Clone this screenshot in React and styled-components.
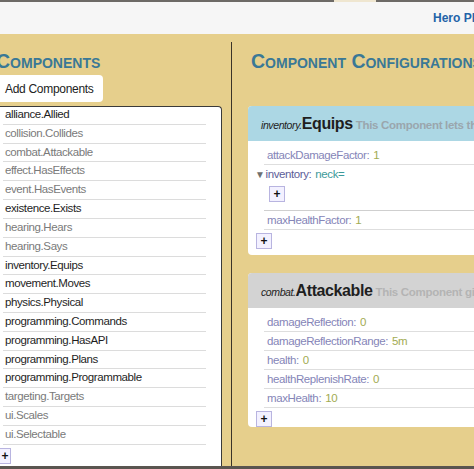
import React from "react";
import styled, { createGlobalStyle } from "styled-components";

const GlobalStyle = createGlobalStyle`
  html, body {
    margin: 0;
    padding: 0;
    overflow: hidden;
    background: #e6cf8c;
  }
  body {
    font-family: "Liberation Sans", Arial, sans-serif;
  }
`;

const components = [
  { name: "alliance.Allied", active: true },
  { name: "collision.Collides" },
  { name: "combat.Attackable" },
  { name: "effect.HasEffects" },
  { name: "event.HasEvents" },
  { name: "existence.Exists", active: true },
  { name: "hearing.Hears" },
  { name: "hearing.Says" },
  { name: "inventory.Equips", active: true },
  { name: "movement.Moves", active: true },
  { name: "physics.Physical", active: true },
  { name: "programming.Commands", active: true },
  { name: "programming.HasAPI", active: true },
  { name: "programming.Plans", active: true },
  { name: "programming.Programmable", active: true },
  { name: "targeting.Targets" },
  { name: "ui.Scales" },
  { name: "ui.Selectable" },
];

const attackable = [
  ["damageReflection", "0"],
  ["damageReflectionRange", "5m"],
  ["health", "0"],
  ["healthReplenishRate", "0"],
  ["maxHealth", "10"],
];

function App() {
  return (
    <Page>
      <GlobalStyle />
      <TopStrip>
        <Tab />
      </TopStrip>
      <Header>
        <HeaderLink>Hero Placeholder</HeaderLink>
      </Header>
      <Main>
        <LeftPanel>
          <Heading>Components</Heading>
          <AddButton>Add Components</AddButton>
          <ListBox>
            {components.map(({ name, active }) => (
              <ListRow key={name} active={active}>
                {name}
              </ListRow>
            ))}
            <PlusButton>+</PlusButton>
          </ListBox>
        </LeftPanel>
        <RightPanel>
          <Heading indent>Component Configurations</Heading>
          <Cards>
            <Card>
              <CardHeader tone="blue">
                <Namespace>inventory.</Namespace>
                <ComponentName>Equips</ComponentName>
                <Description>This Component lets the unit equip items</Description>
              </CardHeader>
              <CardBody>
                <PropRow>
                  <Key>attackDamageFactor:</Key>
                  <Value>1</Value>
                </PropRow>
                <NestedRow>
                  <NestedLine>
                    <Arrow>▼</Arrow>
                    <Key dark>inventory:</Key>
                    <Value teal>neck=</Value>
                  </NestedLine>
                  <NestedAdd>
                    <PlusButton small>+</PlusButton>
                  </NestedAdd>
                </NestedRow>
                <PropRow>
                  <Key>maxHealthFactor:</Key>
                  <Value>1</Value>
                </PropRow>
                <PlusButton small>+</PlusButton>
              </CardBody>
            </Card>
            <Card>
              <CardHeader tone="gray">
                <Namespace>combat.</Namespace>
                <ComponentName>Attackable</ComponentName>
                <Description light>This Component gives the unit health</Description>
              </CardHeader>
              <CardBody flush>
                {attackable.map(([k, v]) => (
                  <PropRow key={k}>
                    <Key>{k}:</Key>
                    <Value>{v}</Value>
                  </PropRow>
                ))}
                <PlusButton small>+</PlusButton>
              </CardBody>
            </Card>
          </Cards>
        </RightPanel>
      </Main>
      <BottomBar />
    </Page>
  );
}

const Page = styled.div`
  width: 640px;
  height: 469px;
  display: flex;
  flex-direction: column;
  background: #e6cf8c;
`;

const TopStrip = styled.div`
  height: 2px;
  background: #6d6a66;
  display: flex;
`;

const Tab = styled.div`
  width: 42px;
  margin-left: 334px;
  background: #efe6d0;
`;

const Header = styled.div`
  height: 32px;
  background: #f6f6f6;
  display: flex;
  align-items: center;
  padding-left: 433px;
  overflow: hidden;
`;

const HeaderLink = styled.span`
  color: #2363a8;
  font-weight: bold;
  font-size: 12px;
  white-space: nowrap;
`;

const Main = styled.div`
  flex: 1;
  display: grid;
  grid-template-columns: 232px 1fr;
  min-height: 0;
`;

const LeftPanel = styled.div`
  margin-top: 8px;
  border-right: 1px solid #3a3328;
  display: flex;
  flex-direction: column;
  align-items: flex-start;
  min-height: 0;
`;

const Heading = styled.h2`
  margin: 7px 0 2px ${(p) => (p.indent ? "19px" : "-4px")};
  font-size: 19.5px;
  line-height: 24px;
  font-weight: bold;
  font-variant: small-caps;
  color: #3a7896;
  white-space: nowrap;
`;

const AddButton = styled.div`
  width: 98px;
  height: 27px;
  padding-left: 5px;
  display: flex;
  align-items: center;
  background: #ffffff;
  border-radius: 0 4px 4px 0;
  font-size: 12px;
  letter-spacing: -0.3px;
  color: #222;
`;

const ListBox = styled.div`
  margin-top: 4px;
  width: 221px;
  flex: 1;
  background: #ffffff;
  border: 1px solid #3a3a3a;
  border-left: none;
  border-bottom: none;
  border-radius: 0 4px 0 0;
  overflow: hidden;
`;

const ListRow = styled.div`
  margin: 0 15px 0 3px;
  height: 17.82px;
  line-height: 17.82px;
  padding-left: 2px;
  border-bottom: 1px solid #dcdcdc;
  font-size: 11.5px;
  letter-spacing: -0.4px;
  color: ${(p) => (p.active ? "#1e1e1e" : "#7a7a7a")};
  white-space: nowrap;

  &:first-child {
    margin-top: -1px;
  }
`;

const PlusButton = styled.div`
  width: ${(p) => (p.small ? "14px" : "10px")};
  height: 14px;
  margin-top: 3px;
  display: flex;
  align-items: center;
  justify-content: center;
  background: #f3f1ff;
  border: 1px solid #b8b4e0;
  ${(p) => (p.small ? "" : "border-left: none;")}
  font-size: 12px;
  font-weight: bold;
  color: #111;
  line-height: 1;
`;

const RightPanel = styled.div`
  margin-top: 8px;
  display: flex;
  flex-direction: column;
  min-height: 0;
`;

const Cards = styled.div`
  margin: 31px 0 0 16px;
  display: flex;
  flex-direction: column;
  gap: 18px;
`;

const Card = styled.div`
  background: #ffffff;
  border-radius: 4px 0 0 4px;
  overflow: hidden;
`;

const CardHeader = styled.div`
  height: 35px;
  display: flex;
  align-items: baseline;
  padding: 8px 0 0 13px;
  box-sizing: border-box;
  background: ${(p) => (p.tone === "blue" ? "#acd7e4" : "#d3d3d3")};
  white-space: nowrap;
  line-height: 20px;
`;

const Namespace = styled.span`
  font-style: italic;
  font-size: 10.5px;
  letter-spacing: -0.4px;
  color: #222;
`;

const ComponentName = styled.span`
  font-weight: bold;
  font-size: 16px;
  letter-spacing: -0.4px;
  color: #1f1f1f;
  margin-right: 3px;
`;

const Description = styled.span`
  font-weight: bold;
  font-size: 11.5px;
  letter-spacing: -0.3px;
  color: ${(p) => (p.light ? "#b4b4b4" : "#9aa6ad")};
`;

const CardBody = styled.div`
  padding: 5px 0 ${(p) => (p.flush ? "0" : "6px")} 8px;
  display: flex;
  flex-direction: column;
  align-items: flex-start;
`;

const PropRow = styled.div`
  align-self: stretch;
  margin-left: 8px;
  height: 18px;
  padding-left: 3px;
  display: flex;
  align-items: center;
  gap: 4px;
  border-bottom: 1px solid #dedede;
  font-size: 11.5px;
  letter-spacing: -0.4px;
  white-space: nowrap;
`;

const NestedRow = styled.div`
  align-self: stretch;
  margin-left: 8px;
  padding-bottom: 8px;
  border-bottom: 1px solid #cfcfcf;
`;

const NestedLine = styled.div`
  height: 18px;
  padding-left: 3px;
  display: flex;
  align-items: center;
  gap: 4px;
  font-size: 11.5px;
  letter-spacing: -0.4px;
  white-space: nowrap;
`;

const NestedAdd = styled.div`
  padding: 0 0 0 5px;
`;

const Arrow = styled.span`
  margin-left: -12px;
  margin-right: -3px;
  font-size: 10px;
  color: #6f6f6f;
`;

const Key = styled.span`
  color: ${(p) => (p.dark ? "#5d5d98" : "#8585b8")};
`;

const Value = styled.span`
  color: ${(p) => (p.teal ? "#3c9a9a" : "#a2ab52")};
`;

const BottomBar = styled.div`
  height: 3px;
  background: #5a5550;
`;

export default App;
